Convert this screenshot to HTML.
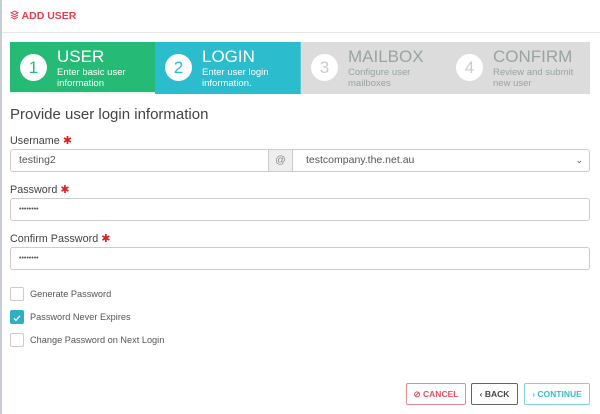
<!DOCTYPE html>
<html><head><style>
*{box-sizing:border-box;margin:0;padding:0}
body{width:600px;height:414px;background:#fff;font-family:"Liberation Sans",sans-serif;position:relative;overflow:hidden;color:#555}
.abs{position:absolute}
.step{position:absolute;top:42px;height:52px}
.circ{position:absolute;left:10px;top:12px;width:27px;height:27px;border-radius:50%;background:#fff;text-align:center;line-height:27px;font-size:17px}
.st{position:absolute;left:47px;top:6px;font-size:17px;color:#fff;line-height:18px}
.sd{position:absolute;left:47px;top:25px;font-size:9.5px;color:#fff;line-height:11px}
.lbl{position:absolute;left:10px;font-size:10.8px;color:#444}
.lbl b{color:#e02020;font-weight:normal;margin-left:3px}
.inp{position:absolute;height:23px;border:1px solid #ccc;border-radius:3px;font-size:10.5px;color:#555;padding-left:8px;line-height:21px}
.cb{position:absolute;left:10px;width:14px;height:14px;border:1px solid #ccc;border-radius:2px}
.cbl{position:absolute;left:30px;font-size:9.2px;color:#555}
.btn{position:absolute;top:383px;height:22px;border:1px solid;border-radius:2px;font-size:8.5px;font-weight:bold;text-align:center;line-height:20px}
</style></head><body>
<div class="abs" style="left:0;top:0;width:2px;height:414px;background:#c8ccd6"></div>
<div class="abs" style="left:10px;top:10px;font-size:10.5px;font-weight:bold;color:#e04050">
<svg width="9" height="10" viewBox="0 0 9 10" style="vertical-align:-1px"><path d="M4.5 1L8 2.8 4.5 4.6 1 2.8Z M1 5l3.5 1.8L8 5 M1 7.2l3.5 1.8L8 7.2" fill="none" stroke="#e04050" stroke-width="1"/></svg> ADD USER</div>
<div class="abs" style="left:2px;top:32px;width:598px;height:1px;background:#e6e6e6"></div>
<div class="step" style="left:10px;width:145px;background:#25bb76;border-bottom:2px solid #e8f6ef"><div class="circ" style="color:#25bb76">1</div><div class="st">USER</div><div class="sd">Enter basic user<br>information</div></div>
<div class="step" style="left:155px;width:145px;background:#2bbccd"><div class="circ" style="color:#2bbccd">2</div><div class="st">LOGIN</div><div class="sd">Enter user login<br>information.</div></div>
<div class="step" style="left:300px;width:290px;background:#dcdcdc;border-left:1px solid #5cc8d4"><div class="circ" style="color:#ccc">3</div><div class="st" style="color:#9aa3a3">MAILBOX</div><div class="sd" style="color:#9aa3a3">Configure user<br>mailboxes</div>
<div class="circ" style="left:155px;color:#ccc">4</div><div class="st" style="left:192px;color:#9aa3a3">CONFIRM</div><div class="sd" style="left:192px;color:#9aa3a3">Review and submit<br>new user</div></div>
<div class="abs" style="left:10px;top:106px;font-size:15px;color:#444">Provide user login information</div>
<div class="lbl" style="top:134px">Username<b>✱</b></div>
<div class="inp" style="left:10px;top:149px;width:259px;border-radius:3px 0 0 3px">testing2</div>
<div class="inp" style="left:268px;top:149px;width:25px;background:#eee;border-radius:0;padding:0;text-align:center;color:#888">@</div>
<div class="inp" style="left:292px;top:149px;width:298px;border-radius:0 3px 3px 0;padding-left:13px">testcompany.the.net.au<span style="position:absolute;right:6px;top:0;font-size:9px">⌄</span></div>
<div class="lbl" style="top:183px">Password<b>✱</b></div>
<div class="inp" style="left:10px;top:198px;width:580px;font-size:7px">••••••••</div>
<div class="lbl" style="top:232px">Confirm Password<b>✱</b></div>
<div class="inp" style="left:10px;top:247px;width:580px;font-size:7px">••••••••</div>
<div class="cb" style="top:287px"></div><div class="cbl" style="top:289px">Generate Password</div>
<div class="cb" style="top:310px;background:#2bb0c4;border-color:#2bb0c4"><svg width="12" height="12" viewBox="0 0 12 12"><path d="M3 6.3l2 2 4-4.5" fill="none" stroke="#fff" stroke-width="1.3"/></svg></div><div class="cbl" style="top:312px">Password Never Expires</div>
<div class="cb" style="top:333px"></div><div class="cbl" style="top:335px">Change Password on Next Login</div>
<div class="btn" style="left:406px;width:60px;color:#e05060;border-color:#e58a93">⊘ CANCEL</div>
<div class="btn" style="left:471px;width:47px;color:#444;border-color:#666">‹ BACK</div>
<div class="btn" style="left:524px;width:66px;color:#3bbccc;border-color:#7fd3dd">› CONTINUE</div>
</body></html>
